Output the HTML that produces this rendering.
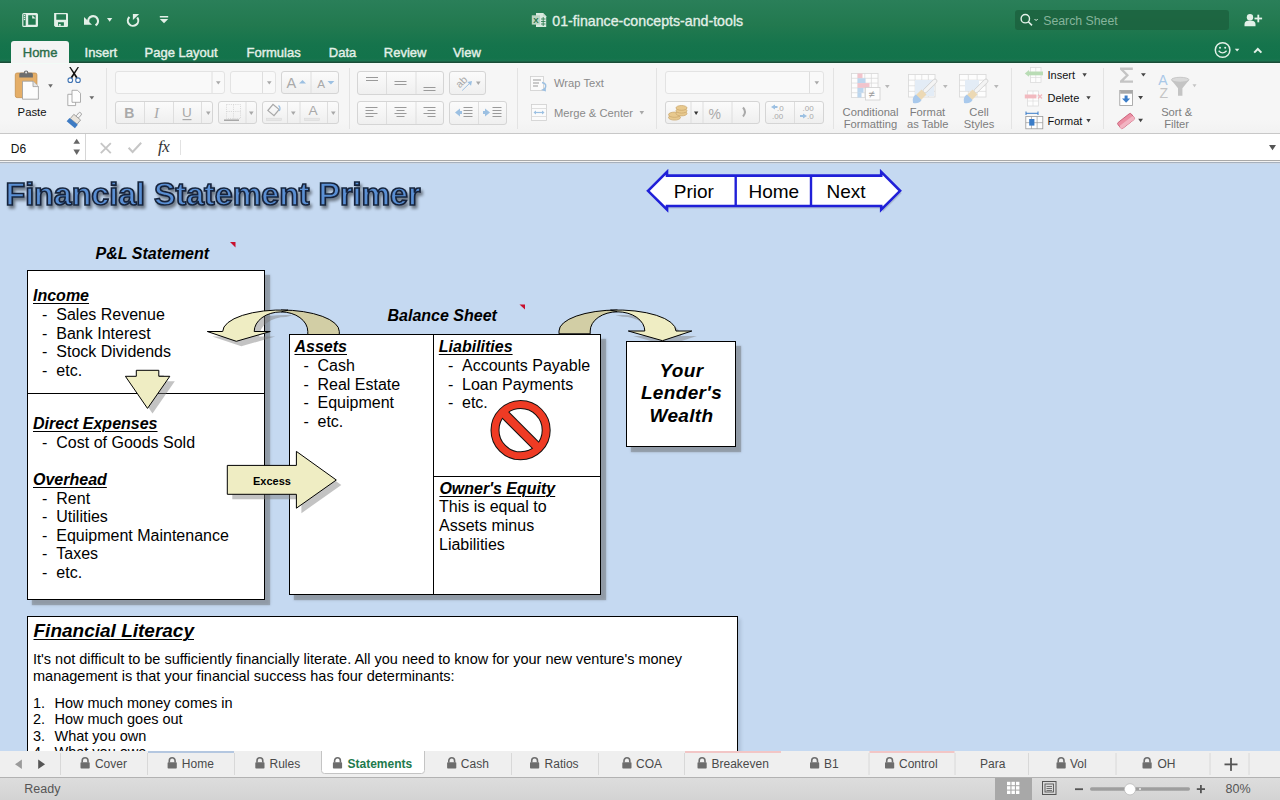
<!DOCTYPE html>
<html><head><meta charset="utf-8">
<style>
*{margin:0;padding:0;box-sizing:border-box}
html,body{width:1280px;height:800px;overflow:hidden;font-family:"Liberation Sans",sans-serif;background:#c5d9f1}
.a{position:absolute}
.t{white-space:nowrap}
#top{left:0;top:0;width:1280px;height:64px;background:linear-gradient(#2a7f59 0px,#22794f 25px,#15744c 45px,#13734b 58px,#1a7450 61px,#1a4c37 62px,#1a4c37 63px,#f2fbf6 63px)}
#ribbon{left:0;top:64px;width:1280px;height:70px;background:linear-gradient(#f6f6f6 80%,#f2f2f2);border-bottom:1px solid #c8c8c8}
#fbar{left:0;top:134px;width:1280px;height:28px;background:#fff;border-bottom:2px solid #c9c9c9}
#sheet{left:0;top:162px;width:1280px;height:589px;background:#c5d9f1;overflow:hidden}
#tabs{left:0;top:751px;width:1280px;height:27px;background:#f0f0f0;border-bottom:1px solid #b9b9b9}
#status{left:0;top:778px;width:1280px;height:22px;background:linear-gradient(#dcdcdc,#d2d2d2)}
.box{position:absolute;background:#fff;border:1px solid #000;box-shadow:5px 5px 1px rgba(70,65,60,.3),5px 5px 3px rgba(70,65,60,.16)}
u{text-decoration-thickness:1px;text-underline-offset:2px}
</style></head><body>
<div id="top" class="a"></div>
<div id="ribbon" class="a"></div>
<div id="sheet" class="a">
<svg class="a" style="left:0;top:0" width="1280" height="589">
<defs><filter id="tsh" x="-5%" y="-20%" width="110%" height="150%"><feGaussianBlur in="SourceAlpha" stdDeviation="1.6"/><feOffset dx="2" dy="3" result="b"/><feComponentTransfer><feFuncA type="linear" slope="0.45"/></feComponentTransfer><feMerge><feMergeNode/><feMergeNode in="SourceGraphic"/></feMerge></filter></defs>
<text x="5.5" y="43.30000000000001" font-family="Liberation Sans" font-weight="700" font-size="32.2" fill="#5a8fd4" stroke="#17243a" stroke-width="1.7" filter="url(#tsh)">Financial Statement Primer</text>
</svg><div class="box" style="left:27px;top:108px;width:238px;height:330px"></div><div class="a" style="left:28px;top:231px;width:236px;height:1px;background:#000"></div><div class="box" style="left:289px;top:172px;width:312px;height:261px"></div><div class="a" style="left:433px;top:173px;width:1px;height:259px;background:#000"></div><div class="a" style="left:434px;top:314px;width:166px;height:1px;background:#000"></div><div class="box" style="left:27px;top:454px;width:711px;height:200px;box-shadow:3px 3px 3px rgba(70,80,100,.16)"></div><svg class="a" style="left:229px;top:79px" width="8" height="8"><polygon points="1,1 6.5,1 6.5,6.5" fill="#c8102e"/></svg><svg class="a" style="left:519px;top:142px" width="8" height="8"><polygon points="0.5,0.5 6,0.5 6,5.5" fill="#c8102e"/></svg><div class="a t" style="left:95.6px;top:82.16px;font-size:16px;line-height:19.2px;font-weight:700;font-style:italic;color:#000;">P&amp;L Statement</div>
<div class="a t" style="left:387.5px;top:143.96px;font-size:16px;line-height:19.2px;font-weight:700;font-style:italic;color:#000;">Balance Sheet</div>
<div class="a t" style="left:33px;top:123.96px;font-size:16px;line-height:19.2px;font-weight:700;font-style:italic;color:#000;"><u>Income</u></div>
<div class="a t" style="left:42px;top:143.06px;font-size:16px;line-height:19.2px;font-weight:400;font-style:normal;color:#000;">-</div>
<div class="a t" style="left:56.3px;top:143.06px;font-size:16px;line-height:19.2px;font-weight:400;font-style:normal;color:#000;">Sales Revenue</div>
<div class="a t" style="left:42px;top:161.56px;font-size:16px;line-height:19.2px;font-weight:400;font-style:normal;color:#000;">-</div>
<div class="a t" style="left:56.3px;top:161.56px;font-size:16px;line-height:19.2px;font-weight:400;font-style:normal;color:#000;">Bank Interest</div>
<div class="a t" style="left:42px;top:180.06px;font-size:16px;line-height:19.2px;font-weight:400;font-style:normal;color:#000;">-</div>
<div class="a t" style="left:56.3px;top:180.06px;font-size:16px;line-height:19.2px;font-weight:400;font-style:normal;color:#000;">Stock Dividends</div>
<div class="a t" style="left:42px;top:198.56px;font-size:16px;line-height:19.2px;font-weight:400;font-style:normal;color:#000;">-</div>
<div class="a t" style="left:56.3px;top:198.56px;font-size:16px;line-height:19.2px;font-weight:400;font-style:normal;color:#000;">etc.</div>
<div class="a t" style="left:33px;top:251.86px;font-size:16px;line-height:19.2px;font-weight:700;font-style:italic;color:#000;"><u>Direct Expenses</u></div>
<div class="a t" style="left:42px;top:270.66px;font-size:16px;line-height:19.2px;font-weight:400;font-style:normal;color:#000;">-</div>
<div class="a t" style="left:56.3px;top:270.66px;font-size:16px;line-height:19.2px;font-weight:400;font-style:normal;color:#000;">Cost of Goods Sold</div>
<div class="a t" style="left:33px;top:307.86px;font-size:16px;line-height:19.2px;font-weight:700;font-style:italic;color:#000;"><u>Overhead</u></div>
<div class="a t" style="left:42px;top:326.66px;font-size:16px;line-height:19.2px;font-weight:400;font-style:normal;color:#000;">-</div>
<div class="a t" style="left:56.3px;top:326.66px;font-size:16px;line-height:19.2px;font-weight:400;font-style:normal;color:#000;">Rent</div>
<div class="a t" style="left:42px;top:345.16px;font-size:16px;line-height:19.2px;font-weight:400;font-style:normal;color:#000;">-</div>
<div class="a t" style="left:56.3px;top:345.16px;font-size:16px;line-height:19.2px;font-weight:400;font-style:normal;color:#000;">Utilities</div>
<div class="a t" style="left:42px;top:363.66px;font-size:16px;line-height:19.2px;font-weight:400;font-style:normal;color:#000;">-</div>
<div class="a t" style="left:56.3px;top:363.66px;font-size:16px;line-height:19.2px;font-weight:400;font-style:normal;color:#000;">Equipment Maintenance</div>
<div class="a t" style="left:42px;top:382.16px;font-size:16px;line-height:19.2px;font-weight:400;font-style:normal;color:#000;">-</div>
<div class="a t" style="left:56.3px;top:382.16px;font-size:16px;line-height:19.2px;font-weight:400;font-style:normal;color:#000;">Taxes</div>
<div class="a t" style="left:42px;top:400.66px;font-size:16px;line-height:19.2px;font-weight:400;font-style:normal;color:#000;">-</div>
<div class="a t" style="left:56.3px;top:400.66px;font-size:16px;line-height:19.2px;font-weight:400;font-style:normal;color:#000;">etc.</div>
<div class="a t" style="left:294.5px;top:174.86px;font-size:16px;line-height:19.2px;font-weight:700;font-style:italic;color:#000;"><u>Assets</u></div>
<div class="a t" style="left:303.5px;top:193.96px;font-size:16px;line-height:19.2px;font-weight:400;font-style:normal;color:#000;">-</div>
<div class="a t" style="left:317.5px;top:193.96px;font-size:16px;line-height:19.2px;font-weight:400;font-style:normal;color:#000;">Cash</div>
<div class="a t" style="left:303.5px;top:212.56px;font-size:16px;line-height:19.2px;font-weight:400;font-style:normal;color:#000;">-</div>
<div class="a t" style="left:317.5px;top:212.56px;font-size:16px;line-height:19.2px;font-weight:400;font-style:normal;color:#000;">Real Estate</div>
<div class="a t" style="left:303.5px;top:231.16px;font-size:16px;line-height:19.2px;font-weight:400;font-style:normal;color:#000;">-</div>
<div class="a t" style="left:317.5px;top:231.16px;font-size:16px;line-height:19.2px;font-weight:400;font-style:normal;color:#000;">Equipment</div>
<div class="a t" style="left:303.5px;top:249.76px;font-size:16px;line-height:19.2px;font-weight:400;font-style:normal;color:#000;">-</div>
<div class="a t" style="left:317.5px;top:249.76px;font-size:16px;line-height:19.2px;font-weight:400;font-style:normal;color:#000;">etc.</div>
<div class="a t" style="left:438.8px;top:174.66px;font-size:16px;line-height:19.2px;font-weight:700;font-style:italic;color:#000;"><u>Liabilities</u></div>
<div class="a t" style="left:448px;top:193.96px;font-size:16px;line-height:19.2px;font-weight:400;font-style:normal;color:#000;">-</div>
<div class="a t" style="left:462px;top:193.96px;font-size:16px;line-height:19.2px;font-weight:400;font-style:normal;color:#000;">Accounts Payable</div>
<div class="a t" style="left:448px;top:212.56px;font-size:16px;line-height:19.2px;font-weight:400;font-style:normal;color:#000;">-</div>
<div class="a t" style="left:462px;top:212.56px;font-size:16px;line-height:19.2px;font-weight:400;font-style:normal;color:#000;">Loan Payments</div>
<div class="a t" style="left:448px;top:231.16px;font-size:16px;line-height:19.2px;font-weight:400;font-style:normal;color:#000;">-</div>
<div class="a t" style="left:462px;top:231.16px;font-size:16px;line-height:19.2px;font-weight:400;font-style:normal;color:#000;">etc.</div>
<div class="a t" style="left:439.4px;top:316.76px;font-size:16px;line-height:19.2px;font-weight:700;font-style:italic;color:#000;"><u>Owner's Equity</u></div>
<div class="a t" style="left:439px;top:335.36px;font-size:16px;line-height:19.2px;font-weight:400;font-style:normal;color:#000;">This is equal to</div>
<div class="a t" style="left:439px;top:353.96px;font-size:16px;line-height:19.2px;font-weight:400;font-style:normal;color:#000;">Assets minus</div>
<div class="a t" style="left:439px;top:372.56px;font-size:16px;line-height:19.2px;font-weight:400;font-style:normal;color:#000;">Liabilities</div>
<div class="a t" style="left:33.5px;top:458.02px;font-size:19px;line-height:22.8px;font-weight:700;font-style:italic;color:#000;"><u>Financial Literacy</u></div>
<div class="a t" style="left:33px;top:489.18px;font-size:14.5px;line-height:17.4px;font-weight:400;font-style:normal;color:#000;">It's not difficult to be sufficiently financially literate. All you need to know for your new venture's money</div>
<div class="a t" style="left:33px;top:506.08px;font-size:14.5px;line-height:17.4px;font-weight:400;font-style:normal;color:#000;">management is that your financial success has four determinants:</div>
<div class="a t" style="left:33px;top:532.58px;font-size:14.5px;line-height:17.4px;font-weight:400;font-style:normal;color:#000;">1.</div>
<div class="a t" style="left:54.5px;top:532.58px;font-size:14.5px;line-height:17.4px;font-weight:400;font-style:normal;color:#000;">How much money comes in</div>
<div class="a t" style="left:33px;top:549.18px;font-size:14.5px;line-height:17.4px;font-weight:400;font-style:normal;color:#000;">2.</div>
<div class="a t" style="left:54.5px;top:549.18px;font-size:14.5px;line-height:17.4px;font-weight:400;font-style:normal;color:#000;">How much goes out</div>
<div class="a t" style="left:33px;top:565.78px;font-size:14.5px;line-height:17.4px;font-weight:400;font-style:normal;color:#000;">3.</div>
<div class="a t" style="left:54.5px;top:565.78px;font-size:14.5px;line-height:17.4px;font-weight:400;font-style:normal;color:#000;">What you own</div>
<div class="a t" style="left:33px;top:582.38px;font-size:14.5px;line-height:17.4px;font-weight:400;font-style:normal;color:#000;">4.</div>
<div class="a t" style="left:54.5px;top:582.38px;font-size:14.5px;line-height:17.4px;font-weight:400;font-style:normal;color:#000;">What you owe</div>
<svg class="a" style="left:0;top:0;overflow:visible" width="1280" height="589"><polygon points="136.3,208.3 158.8,208.3 158.8,214.3 169.8,214.3 147.5,246.4 125.4,214.3 136.3,214.3" fill="#7a7a7a" fill-opacity="0.45" transform="translate(5,5)"/><polygon points="136.3,208.3 158.8,208.3 158.8,214.3 169.8,214.3 147.5,246.4 125.4,214.3 136.3,214.3" fill="#efedc3" stroke="#000" stroke-width="1"/><polygon points="227.3,303.4 296.4,303.4 296.4,289.4 336.3,318.0 296.4,346.2 296.4,332.3 227.3,332.3" fill="#7a7a7a" fill-opacity="0.45" transform="translate(5,5)"/><polygon points="227.3,303.4 296.4,303.4 296.4,289.4 336.3,318.0 296.4,346.2 296.4,332.3 227.3,332.3" fill="#efedc3" stroke="#000" stroke-width="1"/></svg><div class="a t" style="left:253px;top:312.89px;font-size:11px;line-height:13.2px;font-weight:700;font-style:normal;color:#000;">Excess</div>
<svg class="a" style="left:0;top:0;overflow:visible" width="1280" height="589"><path d="M207.3,169.5 L222.7,169.5 A58.3,21.5 0 0 1 288.00,148.16 L281,149.9 A26.8,19.6 0 0 0 254.2,169.5 L270.3,169.5 L236.3,179.3 Z" fill="#7a7a7a" fill-opacity="0.45" transform="translate(5,5)"/><path d="M339.3,172.5 L339.3,169.5 A58.3,21.5 0 0 0 281,148.0 L281,149.9 A26.8,19.6 0 0 1 307.8,169.5 L307.8,172.5 Z" fill="#d2cea5" stroke="#000" stroke-width="1"/><path d="M207.3,169.5 L222.7,169.5 A58.3,21.5 0 0 1 288.00,148.16 L281,149.9 A26.8,19.6 0 0 0 254.2,169.5 L270.3,169.5 L236.3,179.3 Z" fill="#efedc3" stroke="#000" stroke-width="1" stroke-linejoin="miter"/><path d="M691.8,169 L676.0,169 A58.5,21 0 0 0 610.50,148.15 L617.5,149.8 A27.3,19.2 0 0 1 644.8,169 L628.3,169 L662.5,178.7 Z" fill="#7a7a7a" fill-opacity="0.45" transform="translate(5,5)"/><path d="M559.0,171.8 L559.0,169 A58.5,21 0 0 1 617.5,148 L617.5,149.8 A27.3,19.2 0 0 0 590.2,169 L590.2,171.8 Z" fill="#d2cea5" stroke="#000" stroke-width="1"/><path d="M691.8,169 L676.0,169 A58.5,21 0 0 0 610.50,148.15 L617.5,149.8 A27.3,19.2 0 0 1 644.8,169 L628.3,169 L662.5,178.7 Z" fill="#efedc3" stroke="#000" stroke-width="1" stroke-linejoin="miter"/></svg><div class="box" style="left:626px;top:179px;width:110px;height:106px"></div><div class="a" style="left:626px;top:179px;width:110px;text-align:center"></div><div class="a t" style="left:626px;width:111px;text-align:center;top:196.82px;font-size:19px;line-height:24px;font-weight:700;font-style:italic;letter-spacing:0.35px">Your</div><div class="a t" style="left:626px;width:111px;text-align:center;top:219.32px;font-size:19px;line-height:24px;font-weight:700;font-style:italic;letter-spacing:0.35px">Lender's</div><div class="a t" style="left:626px;width:111px;text-align:center;top:241.82px;font-size:19px;line-height:24px;font-weight:700;font-style:italic;letter-spacing:0.35px">Wealth</div><svg class="a" style="left:0;top:0" width="1280" height="589">
<circle cx="520.6" cy="268.2" r="25.6" fill="none" stroke="#111" stroke-width="9"/>
<g transform="rotate(45 520.6 268.2)"><rect x="497.6" y="263.2" width="46" height="10" fill="#111"/></g>
<circle cx="520.6" cy="268.2" r="25.6" fill="none" stroke="#ef3b24" stroke-width="7"/>
<g transform="rotate(45 520.6 268.2)"><rect x="497.6" y="264.2" width="46" height="8" fill="#ef3b24"/></g>
</svg><svg class="a" style="left:0;top:0" width="1280" height="589">
<polygon points="648.0,28.8 667.0,9.9 667.0,13.6 881.2,13.6 881.2,9.9 900.1,28.8 881.2,47.6 881.2,44.0 667.0,44.0 667.0,47.6" fill="#7a8aa0" fill-opacity=".35" transform="translate(1.5,2.5)"/>
<polygon points="648.0,28.8 667.0,9.9 667.0,13.6 881.2,13.6 881.2,9.9 900.1,28.8 881.2,47.6 881.2,44.0 667.0,44.0 667.0,47.6" fill="#fff" stroke="#2020d8" stroke-width="2.6" stroke-linejoin="miter"/>
<line x1="735.7" y1="13.599999999999994" x2="735.7" y2="44" stroke="#2020d8" stroke-width="2.4"/>
<line x1="811" y1="13.599999999999994" x2="811" y2="44" stroke="#2020d8" stroke-width="2.4"/>
</svg><div class="a t" style="left:673.8px;top:19.12px;font-size:19px;line-height:22.8px;font-weight:400;font-style:normal;color:#000;">Prior</div>
<div class="a t" style="left:748.5px;top:19.12px;font-size:19px;line-height:22.8px;font-weight:400;font-style:normal;color:#000;">Home</div>
<div class="a t" style="left:826.5px;top:19.12px;font-size:19px;line-height:22.8px;font-weight:400;font-style:normal;color:#000;">Next</div>

</div>
<svg class="a" style="left:0;top:0" width="1280" height="63">
<path fill-rule="evenodd" fill="#e3f0e8" d="M23.8 13 h12.6 a1.6 1.6 0 0 1 1.6 1.6 v10.9 a1.6 1.6 0 0 1 -1.6 1.6 h-12.6 a1.6 1.6 0 0 1 -1.6 -1.6 v-10.9 a1.6 1.6 0 0 1 1.6 -1.6 z M23.4 14.3 v11.4 h2.3 v-11.4 z M28.2 15.2 v9.5 h7.5 v-9.5 z"/>
<path d="M32.2 15.2 v3.4 h3.5 z" fill="#e3f0e8"/>
<circle cx="24.5" cy="15.6" r=".75" fill="#e3f0e8"/><circle cx="24.5" cy="17.6" r=".75" fill="#e3f0e8"/><circle cx="24.5" cy="19.6" r=".75" fill="#e3f0e8"/>
<path fill-rule="evenodd" fill="#e3f0e8" d="M54.1 12.9 h12.6 a1.3 1.3 0 0 1 1.3 1.3 v11.6 a1.3 1.3 0 0 1 -1.3 1.3 h-11.2 l-1.4 -1.4 z M56.3 14.3 v5.4 h9.7 v-5.4 z M58 22.3 v3.5 h5.9 v-3.5 z"/>
<rect x="58.8" y="24" width="1.9" height="1.8" fill="#e3f0e8"/>
<g fill="none" stroke="#e3f0e8" stroke-width="2.2" stroke-linecap="butt">
 <path d="M88.3 22 A4.9 4.9 0 1 1 95.5 25.3"/>
</g>
<polygon points="84,17 84,24.8 92,24.8" fill="#e3f0e8"/>
<polygon points="107,18 112.3,18 109.65,21.8" fill="#e3f0e8"/>
<path d="M129.4 16.9 A5.2 5.2 0 1 0 137.2 17.5" fill="none" stroke="#e3f0e8" stroke-width="2.1"/>
<polygon points="132.9,14 139.2,14 132.9,20.1" fill="#e3f0e8"/>
<rect x="159.8" y="16" width="8.4" height="1.5" fill="#e3f0e8"/>
<polygon points="159.8,19 168.2,19 164,23.2" fill="#e3f0e8"/>
<!-- excel doc icon -->
<path d="M536 13 h7 l3.2 3.2 v10.8 h-10.2 z" fill="#e3f0e8" opacity=".95"/>
<path d="M543 13 v3.2 h3.2" fill="#c8dccf"/>
<rect x="531.8" y="15.3" width="8.2" height="9.3" fill="#bcd6c4"/>
<text x="533.2" y="23.3" font-family="Liberation Sans" font-size="8" font-weight="700" fill="#217346">X</text>
<g stroke="#217346" stroke-width=".8"><line x1="541" y1="19" x2="545.5" y2="19"/><line x1="541" y1="21.5" x2="545.5" y2="21.5"/><line x1="541" y1="24" x2="545.5" y2="24"/><line x1="543.2" y1="17" x2="543.2" y2="26"/></g>
<!-- search box -->
<rect x="1015" y="10" width="214" height="20" rx="3" fill="#1b5f3c" fill-opacity=".75"/>
<circle cx="1025.3" cy="18.7" r="4.2" fill="none" stroke="#e3f0e8" stroke-width="1.4"/>
<line x1="1028.3" y1="21.7" x2="1032" y2="25.4" stroke="#e3f0e8" stroke-width="1.6"/>
<path d="M1034.5 19 l1.6 1.6 l1.6 -1.6" fill="none" stroke="#e3f0e8" stroke-width="1"/>
<!-- person+ -->
<circle cx="1250" cy="17.3" r="3.2" fill="#e3f0e8"/>
<path d="M1244.5 26.2 v-2.2 c0 -2.5 2.2 -3.6 5.5 -3.6 c3.3 0 5.5 1.1 5.5 3.6 v2.2 z" fill="#e3f0e8"/>
<rect x="1254.5" y="17.6" width="7.6" height="1.8" fill="#e3f0e8"/>
<rect x="1257.4" y="14.7" width="1.8" height="7.6" fill="#e3f0e8"/>
<!-- smiley -->
<circle cx="1222.6" cy="50" r="7.3" fill="none" stroke="#e3f0e8" stroke-width="1.5"/>
<circle cx="1220" cy="47.8" r="1" fill="#e3f0e8"/><circle cx="1225.2" cy="47.8" r="1" fill="#e3f0e8"/>
<path d="M1218.6 50.8 q4 4.2 8 0" fill="none" stroke="#e3f0e8" stroke-width="1.4"/>
<polygon points="1234.8,48.7 1239.4,48.7 1237.1,51.6" fill="#e3f0e8"/>
<path d="M1254.2 52.6 l3.6 -3.6 l3.6 3.6" fill="none" stroke="#e3f0e8" stroke-width="2"/>
<!-- Home tab -->
<path d="M11 63 v-19 a3 3 0 0 1 3 -3 h52 a3 3 0 0 1 3 3 v19 z" fill="#f4f4f4"/>
</svg><div class="a t" style="left:552.3px;top:12.76px;font-size:14.2px;line-height:17.04px;font-weight:400;font-style:normal;color:#e3f0e8;-webkit-text-stroke:0.3px #e3f0e8">01-finance-concepts-and-tools</div>
<div class="a t" style="left:1043.2px;top:13.96px;font-size:12.3px;line-height:14.76px;font-weight:400;font-style:normal;color:#86b49c;">Search Sheet</div>
<div class="a t" style="left:22.75px;top:44.95px;font-size:13px;line-height:15.6px;font-weight:400;font-style:normal;color:#2b6d4a;-webkit-text-stroke:0.4px #2b6d4a">Home</div>
<div class="a t" style="left:84.6px;top:44.95px;font-size:13px;line-height:15.6px;font-weight:400;font-style:normal;color:#e3f0e8;-webkit-text-stroke:0.4px #e3f0e8">Insert</div>
<div class="a t" style="left:144.6px;top:44.95px;font-size:13px;line-height:15.6px;font-weight:400;font-style:normal;color:#e3f0e8;-webkit-text-stroke:0.4px #e3f0e8">Page Layout</div>
<div class="a t" style="left:246.5px;top:44.95px;font-size:13px;line-height:15.6px;font-weight:400;font-style:normal;color:#e3f0e8;-webkit-text-stroke:0.4px #e3f0e8">Formulas</div>
<div class="a t" style="left:328.8px;top:44.95px;font-size:13px;line-height:15.6px;font-weight:400;font-style:normal;color:#e3f0e8;-webkit-text-stroke:0.4px #e3f0e8">Data</div>
<div class="a t" style="left:383.8px;top:44.95px;font-size:13px;line-height:15.6px;font-weight:400;font-style:normal;color:#e3f0e8;-webkit-text-stroke:0.4px #e3f0e8">Review</div>
<div class="a t" style="left:452.9px;top:44.95px;font-size:13px;line-height:15.6px;font-weight:400;font-style:normal;color:#e3f0e8;-webkit-text-stroke:0.4px #e3f0e8">View</div>

<svg class="a" style="left:0;top:0" width="1280" height="134"><line x1="106.5" y1="68" x2="106.5" y2="129" stroke="#e3e3e3" stroke-width="1"/><line x1="349.5" y1="68" x2="349.5" y2="129" stroke="#e3e3e3" stroke-width="1"/><line x1="517.5" y1="68" x2="517.5" y2="129" stroke="#e3e3e3" stroke-width="1"/><line x1="656.5" y1="68" x2="656.5" y2="129" stroke="#e3e3e3" stroke-width="1"/><line x1="833.5" y1="68" x2="833.5" y2="129" stroke="#e3e3e3" stroke-width="1"/><line x1="1011.5" y1="68" x2="1011.5" y2="129" stroke="#e3e3e3" stroke-width="1"/><line x1="1103.5" y1="68" x2="1103.5" y2="129" stroke="#e3e3e3" stroke-width="1"/><rect x="15.3" y="73" width="21.6" height="24.6" rx="1.8" fill="#e5ae67" stroke="#c58f4d" stroke-width=".8"/>
<path d="M19.3 77.4 v-3.2 a1.5 1.5 0 0 1 1.5 -1.5 h3 a2.3 2.3 0 0 1 4.6 0 h3 a1.5 1.5 0 0 1 1.5 1.5 v3.2 z" fill="#6e6e6e"/>
<circle cx="26.1" cy="72.5" r="1" fill="#e8e8e8"/>
<path d="M22.5 81.2 h10.5 l5.4 5.4 v12.6 h-15.9 z" fill="#fcfcfc" stroke="#9a9a9a" stroke-width=".8"/>
<path d="M33 81.2 v5.4 h5.4" fill="#e6e6e6" stroke="#9a9a9a" stroke-width=".8"/>
<polygon points="48.2,84.2 52.8,84.2 50.5,87.8" fill="#6a6a6a"/>
<polygon points="69.2,67 70.6,67 77.6,77.2 76.2,78.4" fill="#111"/><polygon points="79,67 77.6,67 70.6,77.2 72,78.4" fill="#111"/>
<circle cx="70.3" cy="80.2" r="2.3" fill="#fff" stroke="#3f73b3" stroke-width="1.1"/>
<circle cx="78" cy="80.2" r="2.3" fill="#fff" stroke="#3f73b3" stroke-width="1.1"/>
<path d="M67.8 94.3 h5 l2.8 2.8 v8.5 h-7.8 z" fill="#fdfdfd" stroke="#9a9a9a" stroke-width=".8"/>
<path d="M72 90.3 h5.5 l3 3 v9 h-8.5 z" fill="#fdfdfd" stroke="#9a9a9a" stroke-width=".8"/>
<polygon points="89.4,96.2 94.2,96.2 91.8,99.6" fill="#6a6a6a"/>
<g transform="rotate(40 74 121)">
<rect x="72.4" y="110.5" width="3.2" height="6" rx="1.2" fill="#f5f5f5" stroke="#8a8a8a" stroke-width=".7"/>
<rect x="69.6" y="116" width="8.8" height="5.5" fill="#e9e4dc" stroke="#8a8a8a" stroke-width=".7"/>
<path d="M68.6 121.5 h10.8 v4.5 h-10.8 z" fill="#3e7bc3"/>
</g>
<defs><linearGradient id="bg" x1="0" y1="0" x2="0" y2="1"><stop offset="0" stop-color="#fbfbfb"/><stop offset="1" stop-color="#efefef"/></linearGradient></defs><rect x="115.5" y="71.5" width="109" height="22" rx="2.5" fill="#f9f9f9" stroke="#e3e3e3" stroke-width="1"/><line x1="212.0" y1="72" x2="212.0" y2="93" stroke="#dedede" stroke-width="1"/><polygon points="216,81.2 220.6,81.2 218.3,84.60000000000001" fill="#a8a8a8"/><rect x="230.5" y="71.5" width="45" height="22" rx="2.5" fill="#f9f9f9" stroke="#e3e3e3" stroke-width="1"/><line x1="262.5" y1="72" x2="262.5" y2="93" stroke="#dedede" stroke-width="1"/><polygon points="267,81.2 271.6,81.2 269.3,84.60000000000001" fill="#a8a8a8"/><rect x="281.5" y="71.5" width="57" height="22" rx="2.5" fill="url(#bg)" stroke="#d5d5d5" stroke-width="1"/><line x1="311.0" y1="72" x2="311.0" y2="93" stroke="#dedede" stroke-width="1"/><rect x="115.5" y="101.5" width="97" height="22" rx="2.5" fill="url(#bg)" stroke="#d5d5d5" stroke-width="1"/><line x1="144.5" y1="102" x2="144.5" y2="123" stroke="#dedede" stroke-width="1"/><line x1="173.5" y1="102" x2="173.5" y2="123" stroke="#dedede" stroke-width="1"/><line x1="201.5" y1="102" x2="201.5" y2="123" stroke="#dedede" stroke-width="1"/><rect x="218.5" y="101.5" width="38" height="22" rx="2.5" fill="url(#bg)" stroke="#d5d5d5" stroke-width="1"/><line x1="246.0" y1="102" x2="246.0" y2="123" stroke="#dedede" stroke-width="1"/><rect x="262.5" y="101.5" width="76" height="22" rx="2.5" fill="url(#bg)" stroke="#d5d5d5" stroke-width="1"/><line x1="287.5" y1="102" x2="287.5" y2="123" stroke="#dedede" stroke-width="1"/><line x1="300.0" y1="102" x2="300.0" y2="123" stroke="#dedede" stroke-width="1"/><line x1="327.5" y1="102" x2="327.5" y2="123" stroke="#dedede" stroke-width="1"/><polygon points="206,111.5 210.6,111.5 208.3,114.9" fill="#a8a8a8"/><polygon points="249,111.5 253.6,111.5 251.3,114.9" fill="#a8a8a8"/><polygon points="291,111.5 295.6,111.5 293.3,114.9" fill="#a8a8a8"/><polygon points="331,111.5 335.6,111.5 333.3,114.9" fill="#a8a8a8"/><text x="286.6" y="88" font-family="Liberation Sans" font-size="14.5" fill="#a9a9a9">A</text><polygon points="299,83.5 306,83.5 302.5,80" fill="#9cc0e2"/><text x="317.2" y="88" font-family="Liberation Sans" font-size="11.7" fill="#a9a9a9">A</text><polygon points="327.5,81 334.4,81 330.95,84.5" fill="#9cc0e2"/><text x="124.3" y="118" font-family="Liberation Sans" font-weight="700" font-size="14" fill="#a9a9a9">B</text><text x="154" y="118" font-family="Liberation Serif" font-style="italic" font-size="15" fill="#a9a9a9">I</text><text x="182" y="116.5" font-family="Liberation Sans" font-size="13.5" fill="#a9a9a9">U</text><rect x="182.5" y="119" width="9" height="1.2" fill="#a9a9a9"/><rect x="226.5" y="104.5" width="14" height="14" fill="none" stroke="#cfcfcf" stroke-width=".8" stroke-dasharray="1 1.2"/><line x1="233.5" y1="104.5" x2="233.5" y2="118.5" stroke="#cfcfcf" stroke-width=".8" stroke-dasharray="1 1.2"/><line x1="226.5" y1="111.5" x2="240.5" y2="111.5" stroke="#cfcfcf" stroke-width=".8" stroke-dasharray="1 1.2"/><rect x="224" y="119.5" width="15" height="1.4" fill="#a0a0a0"/><g transform="rotate(40 273.5 110)"><rect x="269.5" y="106" width="8" height="8" fill="none" stroke="#a9a9a9" stroke-width="1.2"/></g><path d="M278.5 105.5 q2.5 2 0.8 5.5" fill="none" stroke="#9cc0e2" stroke-width="1.3"/><rect x="266.5" y="118.2" width="15" height="2.5" fill="#e6e6e6" stroke="#d8d8d8" stroke-width=".5"/><text x="308.6" y="114.8" font-family="Liberation Sans" font-size="13.7" fill="#a9a9a9">A</text><rect x="304.5" y="118.2" width="15" height="2.5" fill="#e6e6e6" stroke="#d8d8d8" stroke-width=".5"/><rect x="357.5" y="71.5" width="86" height="23" rx="2.5" fill="url(#bg)" stroke="#d5d5d5" stroke-width="1"/><line x1="386.5" y1="72" x2="386.5" y2="94" stroke="#dedede" stroke-width="1"/><line x1="416.0" y1="72" x2="416.0" y2="94" stroke="#dedede" stroke-width="1"/><rect x="449.5" y="71.5" width="36" height="23" rx="2.5" fill="url(#bg)" stroke="#d5d5d5" stroke-width="1"/><polygon points="476,81.5 480.6,81.5 478.3,84.9" fill="#a8a8a8"/><rect x="357.5" y="101.5" width="86" height="23" rx="2.5" fill="url(#bg)" stroke="#d5d5d5" stroke-width="1"/><line x1="386.5" y1="102" x2="386.5" y2="124" stroke="#dedede" stroke-width="1"/><line x1="416.0" y1="102" x2="416.0" y2="124" stroke="#dedede" stroke-width="1"/><rect x="449.5" y="101.5" width="57" height="23" rx="2.5" fill="url(#bg)" stroke="#d5d5d5" stroke-width="1"/><line x1="478.5" y1="102" x2="478.5" y2="124" stroke="#dedede" stroke-width="1"/><rect x="366" y="77" width="11" height="1" fill="#9a9a9a"/><rect x="366" y="79" width="0" height="1" fill="#9a9a9a"/><rect x="394.5" y="81" width="12" height="1" fill="#9a9a9a"/><rect x="394.5" y="84" width="12" height="1" fill="#9a9a9a"/><rect x="423.5" y="87" width="12" height="1" fill="#9a9a9a"/><rect x="423.5" y="90" width="12" height="1" fill="#9a9a9a"/><rect x="366" y="77" width="12" height="1" fill="#9a9a9a"/><rect x="366" y="80" width="12" height="1" fill="#9a9a9a"/><rect x="365.5" y="107" width="12" height="1" fill="#9a9a9a"/><rect x="365.5" y="110" width="8" height="1" fill="#9a9a9a"/><rect x="365.5" y="113" width="12" height="1" fill="#9a9a9a"/><rect x="365.5" y="116" width="8" height="1" fill="#9a9a9a"/><rect x="394.5" y="107" width="12" height="1" fill="#9a9a9a"/><rect x="396.5" y="110" width="8" height="1" fill="#9a9a9a"/><rect x="394.5" y="113" width="12" height="1" fill="#9a9a9a"/><rect x="396.5" y="116" width="8" height="1" fill="#9a9a9a"/><rect x="423.5" y="107" width="12" height="1" fill="#9a9a9a"/><rect x="427.5" y="110" width="8" height="1" fill="#9a9a9a"/><rect x="423.5" y="113" width="12" height="1" fill="#9a9a9a"/><rect x="427.5" y="116" width="8" height="1" fill="#9a9a9a"/><text x="461.5" y="85.5" text-anchor="middle" font-family="Liberation Sans" font-size="10.5" fill="#a9a9a9" transform="rotate(-45 461.5 82)">ab</text><line x1="462.2" y1="90.5" x2="470.5" y2="82.5" stroke="#9cc0e2" stroke-width="1"/><polygon points="472,81 467.3,82 471,85.7" fill="#9cc0e2"/><polygon points="455,112.5 460,108.5 460,116.5" fill="#9cc0e2"/><rect x="459" y="111" width="3" height="3" fill="#9cc0e2"/><rect x="463.5" y="107" width="9" height="1" fill="#9a9a9a"/><rect x="463.5" y="110" width="9" height="1" fill="#9a9a9a"/><rect x="463.5" y="113" width="9" height="1" fill="#9a9a9a"/><rect x="463.5" y="116" width="9" height="1" fill="#9a9a9a"/><polygon points="490,112.5 485,108.5 485,116.5" fill="#9cc0e2"/><rect x="483" y="111" width="3" height="3" fill="#9cc0e2"/><rect x="492.5" y="107" width="9" height="1" fill="#9a9a9a"/><rect x="492.5" y="110" width="9" height="1" fill="#9a9a9a"/><rect x="492.5" y="113" width="9" height="1" fill="#9a9a9a"/><rect x="492.5" y="116" width="9" height="1" fill="#9a9a9a"/><rect x="530.5" y="76.5" width="13" height="14" fill="#fbfbfb" stroke="#cfcfcf" stroke-width=".8"/><rect x="533" y="79.5" width="8" height="1" fill="#9a9a9a"/><rect x="533" y="82.5" width="6" height="1" fill="#9a9a9a"/><rect x="533" y="85.5" width="5" height="1" fill="#9a9a9a"/><path d="M542 82.5 q6 1 2.5 7" fill="none" stroke="#9cc0e2" stroke-width="1.5"/><polygon points="541,90 545.5,87.5 546,91.5" fill="#9cc0e2"/><rect x="531.5" y="104.5" width="15" height="16" fill="#fbfbfb" stroke="#cfcfcf" stroke-width=".8"/><line x1="531.5" y1="108.5" x2="546.5" y2="108.5" stroke="#d8d8d8" stroke-width=".8"/><line x1="531.5" y1="116.5" x2="546.5" y2="116.5" stroke="#d8d8d8" stroke-width=".8"/><line x1="534.5" y1="112.5" x2="543.5" y2="112.5" stroke="#9cc0e2" stroke-width="1.2"/><polygon points="533.5,112.5 536,110.5 536,114.5" fill="#9cc0e2"/><polygon points="544.5,112.5 542,110.5 542,114.5" fill="#9cc0e2"/><polygon points="639.5,111 644.1,111 641.8,114.4" fill="#a8a8a8"/><rect x="665.5" y="71.5" width="158" height="22" rx="2.5" fill="#f9f9f9" stroke="#e3e3e3" stroke-width="1"/><line x1="809.5" y1="72" x2="809.5" y2="93" stroke="#dedede" stroke-width="1"/><polygon points="814.5,81.2 819.1,81.2 816.8,84.60000000000001" fill="#a8a8a8"/><rect x="665.5" y="101.5" width="94" height="22" rx="2.5" fill="url(#bg)" stroke="#d5d5d5" stroke-width="1"/><line x1="691.0" y1="102" x2="691.0" y2="123" stroke="#dedede" stroke-width="1"/><line x1="703.0" y1="102" x2="703.0" y2="123" stroke="#dedede" stroke-width="1"/><line x1="732.0" y1="102" x2="732.0" y2="123" stroke="#dedede" stroke-width="1"/><rect x="765.5" y="101.5" width="58" height="22" rx="2.5" fill="url(#bg)" stroke="#d5d5d5" stroke-width="1"/><line x1="794.5" y1="102" x2="794.5" y2="123" stroke="#dedede" stroke-width="1"/><polygon points="694,111.5 698.3,111.5 696.15,114.9" fill="#333"/><ellipse cx="674.5" cy="117.5" rx="6" ry="2.6" fill="#e8c98e" stroke="#c9a56a" stroke-width=".7"/><ellipse cx="674.5" cy="114.7" rx="6" ry="2.6" fill="#e8c98e" stroke="#c9a56a" stroke-width=".7"/><ellipse cx="681.5" cy="113.5" rx="5.5" ry="2.4" fill="#e8c98e" stroke="#c9a56a" stroke-width=".7"/><ellipse cx="681.5" cy="110.7" rx="5.5" ry="2.4" fill="#e8c98e" stroke="#c9a56a" stroke-width=".7"/><ellipse cx="681.5" cy="107.9" rx="5.5" ry="2.4" fill="#e8c98e" stroke="#c9a56a" stroke-width=".7"/><text x="708.5" y="118.5" font-family="Liberation Sans" font-size="14" fill="#a9a9a9">%</text><path d="M743 107.5 q4 4.5 0 9" fill="none" stroke="#a9a9a9" stroke-width="2"/><text x="777" y="111" font-family="Liberation Sans" font-size="8" fill="#a9a9a9">.0</text><text x="772" y="119" font-family="Liberation Sans" font-size="8" fill="#a9a9a9">.00</text><polygon points="771,107 775,104.5 775,109.5" fill="#9cc0e2"/><rect x="774.5" y="106" width="3" height="2" fill="#9cc0e2"/><text x="802.5" y="111" font-family="Liberation Sans" font-size="8" fill="#a9a9a9">.00</text><text x="807" y="119" font-family="Liberation Sans" font-size="8" fill="#a9a9a9">.0</text><polygon points="807,116 803,113.5 803,118.5" fill="#9cc0e2"/><rect x="800" y="115" width="3" height="2" fill="#9cc0e2"/><rect x="851.5" y="73.5" width="26.5" height="24" fill="#fdfdfd" stroke="#d8d8d8" stroke-width=".8"/><line x1="858.125" y1="73.5" x2="858.125" y2="97.5" stroke="#d8d8d8" stroke-width=".7"/><line x1="864.75" y1="73.5" x2="864.75" y2="97.5" stroke="#d8d8d8" stroke-width=".7"/><line x1="871.375" y1="73.5" x2="871.375" y2="97.5" stroke="#d8d8d8" stroke-width=".7"/><line x1="851.5" y1="78.3" x2="878.0" y2="78.3" stroke="#d8d8d8" stroke-width=".7"/><line x1="851.5" y1="83.1" x2="878.0" y2="83.1" stroke="#d8d8d8" stroke-width=".7"/><line x1="851.5" y1="87.9" x2="878.0" y2="87.9" stroke="#d8d8d8" stroke-width=".7"/><line x1="851.5" y1="92.7" x2="878.0" y2="92.7" stroke="#d8d8d8" stroke-width=".7"/><rect x="857.5" y="73.5" width="5" height="4.8" fill="#f1c4cc"/><rect x="857.5" y="78.3" width="8" height="4.8" fill="#bcd6ee"/><rect x="857.5" y="83.1" width="12" height="4.8" fill="#f1c4cc"/><rect x="857.5" y="87.9" width="6" height="4.8" fill="#bcd6ee"/><rect x="857.5" y="92.7" width="4" height="4.8" fill="#bcd6ee"/><rect x="865.5" y="87.5" width="14.5" height="12.5" fill="#fdfdfd" stroke="#d0d0d0" stroke-width=".8"/><text x="868.5" y="98" font-family="Liberation Sans" font-size="11" fill="#9a9a9a">≠</text><polygon points="885,85 889.6,85 887.3,88.2" fill="#b8b8b8"/><polygon points="943,85 947.6,85 945.3,88.2" fill="#b8b8b8"/><polygon points="994,85 998.6,85 996.3,88.2" fill="#b8b8b8"/><rect x="908.5" y="74.5" width="26.5" height="22.5" fill="#fdfdfd" stroke="#d8d8d8" stroke-width=".8"/><line x1="915.125" y1="74.5" x2="915.125" y2="97.0" stroke="#d8d8d8" stroke-width=".7"/><line x1="921.75" y1="74.5" x2="921.75" y2="97.0" stroke="#d8d8d8" stroke-width=".7"/><line x1="928.375" y1="74.5" x2="928.375" y2="97.0" stroke="#d8d8d8" stroke-width=".7"/><line x1="908.5" y1="80.125" x2="935.0" y2="80.125" stroke="#d8d8d8" stroke-width=".7"/><line x1="908.5" y1="85.75" x2="935.0" y2="85.75" stroke="#d8d8d8" stroke-width=".7"/><line x1="908.5" y1="91.375" x2="935.0" y2="91.375" stroke="#d8d8d8" stroke-width=".7"/><rect x="915" y="80" width="19" height="16" fill="#e3ecf6"/><g transform="translate(918 98) rotate(-45)"><rect x="8" y="-2" width="18" height="4" rx="2" fill="#f4f4f4" stroke="#c8c8c8" stroke-width=".7"/><path d="M0 -3.5 q-2 3.5 0 7 h8.5 v-7 z" fill="#ecd9b5"/><path d="M-7 0 q3 -5 8 -4 v8 q-5 1 -8 -4 z" fill="#a9c9ec"/></g><rect x="959.5" y="74.5" width="26.5" height="22.5" fill="#fdfdfd" stroke="#d8d8d8" stroke-width=".8"/><line x1="968.3333333333334" y1="74.5" x2="968.3333333333334" y2="97.0" stroke="#d8d8d8" stroke-width=".7"/><line x1="977.1666666666666" y1="74.5" x2="977.1666666666666" y2="97.0" stroke="#d8d8d8" stroke-width=".7"/><line x1="959.5" y1="80.125" x2="986.0" y2="80.125" stroke="#d8d8d8" stroke-width=".7"/><line x1="959.5" y1="85.75" x2="986.0" y2="85.75" stroke="#d8d8d8" stroke-width=".7"/><line x1="959.5" y1="91.375" x2="986.0" y2="91.375" stroke="#d8d8d8" stroke-width=".7"/><rect x="965" y="80" width="14" height="11" fill="#e3ecf6"/><g transform="translate(969 98) rotate(-45)"><rect x="8" y="-2" width="18" height="4" rx="2" fill="#f4f4f4" stroke="#c8c8c8" stroke-width=".7"/><path d="M0 -3.5 q-2 3.5 0 7 h8.5 v-7 z" fill="#ecd9b5"/><path d="M-7 0 q3 -5 8 -4 v8 q-5 1 -8 -4 z" fill="#a9c9ec"/></g><rect x="1030.5" y="67.5" width="10.5" height="15" fill="#fdfdfd" stroke="#dcdcdc" stroke-width=".8"/><line x1="1035.75" y1="67.5" x2="1035.75" y2="82.5" stroke="#dcdcdc" stroke-width=".7"/><line x1="1030.5" y1="72.5" x2="1041.0" y2="72.5" stroke="#dcdcdc" stroke-width=".7"/><line x1="1030.5" y1="77.5" x2="1041.0" y2="77.5" stroke="#dcdcdc" stroke-width=".7"/><rect x="1028" y="71.5" width="15" height="3.8" fill="#b9dcb5"/><polygon points="1024.8,73.4 1029,70 1029,76.8" fill="#b9dcb5"/><rect x="1027.5" y="91.0" width="11" height="15" fill="#fdfdfd" stroke="#dcdcdc" stroke-width=".8"/><line x1="1033.0" y1="91.0" x2="1033.0" y2="106.0" stroke="#dcdcdc" stroke-width=".7"/><line x1="1027.5" y1="96.0" x2="1038.5" y2="96.0" stroke="#dcdcdc" stroke-width=".7"/><line x1="1027.5" y1="101.0" x2="1038.5" y2="101.0" stroke="#dcdcdc" stroke-width=".7"/><rect x="1024.8" y="94.5" width="11.6" height="3.9" fill="#f2b9bf"/><path d="M1038 94.5 l4 4 M1042 94.5 l-4 4" stroke="#f2b9bf" stroke-width="1.3"/><rect x="1025.8" y="116.5" width="17" height="12.3" fill="#fdfdfd" stroke="#9a9a9a" stroke-width=".8"/><line x1="1031.4666666666667" y1="116.5" x2="1031.4666666666667" y2="128.8" stroke="#9a9a9a" stroke-width=".7"/><line x1="1037.1333333333332" y1="116.5" x2="1037.1333333333332" y2="128.8" stroke="#9a9a9a" stroke-width=".7"/><line x1="1025.8" y1="122.65" x2="1042.8" y2="122.65" stroke="#9a9a9a" stroke-width=".7"/><rect x="1029.2" y="119" width="5.2" height="6.6" fill="#3a7cc8"/><line x1="1026" y1="113.3" x2="1038" y2="113.3" stroke="#3a7cc8" stroke-width="1"/><rect x="1025.5" y="111.5" width="1" height="3.5" fill="#3a7cc8"/><rect x="1037.5" y="111.5" width="1" height="3.5" fill="#3a7cc8"/><polygon points="1082.4,73.3 1086.8000000000002,73.3 1084.6000000000001,76.7" fill="#444"/><polygon points="1086.3,96.2 1090.7,96.2 1088.5,99.60000000000001" fill="#444"/><polygon points="1086.3,119 1090.7,119 1088.5,122.4" fill="#444"/><path d="M1120 67.5 h12.8 v2.6 h-9 l5.2 5.1 l-5.2 5.2 h9.2 v2.4 h-13 v-2 l5.8 -5.6 l-5.8 -5.7 z" fill="#c4c4c4"/><polygon points="1141,73.3 1145.8,73.3 1143.4,76.6" fill="#444"/><rect x="1119.8" y="90.5" width="12.6" height="15" fill="#fff" stroke="#9a9a9a" stroke-width=".8"/><rect x="1120.2" y="90.9" width="11.8" height="2.8" fill="#a8a8a8"/><rect x="1124.6" y="95.5" width="3" height="3.5" fill="#3a7cc8"/><polygon points="1122,98.6 1130.2,98.6 1126.1,102.8" fill="#3a7cc8"/><polygon points="1138.2,96 1143.0,96 1140.6000000000001,99.5" fill="#444"/><g transform="rotate(-38 1126 121)"><rect x="1117.5" y="117.3" width="17" height="7.5" rx="1.5" fill="#ec8ea3" stroke="#c4566f" stroke-width=".8"/><rect x="1117.5" y="121" width="17" height="3.8" rx="1" fill="#f2b4c2"/></g><polygon points="1138.2,118.8 1143.0,118.8 1140.6000000000001,122.3" fill="#444"/><text x="1158.3" y="84.5" font-family="Liberation Sans" font-size="14" fill="#a9c8e8">A</text><text x="1159.5" y="97.6" font-family="Liberation Sans" font-size="14" fill="#c4c4c4">Z</text><ellipse cx="1180.2" cy="79.8" rx="8.8" ry="2.5" fill="#d9d9d9" stroke="#c0c0c0" stroke-width=".8"/><path d="M1171.5 80.2 l6.5 8 v7.6 h4.4 v-7.6 l6.5 -8 q-8.7 3.5 -17.4 0 z" fill="#c4c4c4"/><polygon points="1192.5,84.3 1196.5,84.3 1194.5,87.3" fill="#c4c4c4"/></svg><div class="a t" style="left:17.6px;top:105.50px;font-size:11.3px;line-height:13.56px;font-weight:400;font-style:normal;color:#111;">Paste</div>
<div class="a t" style="left:554px;top:77.20px;font-size:11.2px;line-height:13.44px;font-weight:400;font-style:normal;color:#8a8a8a;">Wrap Text</div>
<div class="a t" style="left:554px;top:106.90px;font-size:11.2px;line-height:13.44px;font-weight:400;font-style:normal;color:#8a8a8a;">Merge &amp; Center</div>
<div class="a t" style="left:830.6px;width:80px;text-align:center;top:106.22px;font-size:11.2px;line-height:13px;color:#7d7d7d">Conditional</div><div class="a t" style="left:830.4px;width:80px;text-align:center;top:118.12px;font-size:11.2px;line-height:13px;color:#7d7d7d">Formatting</div><div class="a t" style="left:887.5px;width:80px;text-align:center;top:106.22px;font-size:11.2px;line-height:13px;color:#7d7d7d">Format</div><div class="a t" style="left:887.7px;width:80px;text-align:center;top:118.12px;font-size:11.2px;line-height:13px;color:#7d7d7d">as Table</div><div class="a t" style="left:939px;width:80px;text-align:center;top:106.22px;font-size:11.2px;line-height:13px;color:#7d7d7d">Cell</div><div class="a t" style="left:939.1px;width:80px;text-align:center;top:118.12px;font-size:11.2px;line-height:13px;color:#7d7d7d">Styles</div><div class="a t" style="left:1136.7px;width:80px;text-align:center;top:105.92px;font-size:11.2px;line-height:13px;color:#7d7d7d">Sort &amp;</div><div class="a t" style="left:1136.6px;width:80px;text-align:center;top:118.12px;font-size:11.2px;line-height:13px;color:#7d7d7d">Filter</div><div class="a t" style="left:1047.5px;top:68.84px;font-size:11px;line-height:13.2px;font-weight:400;font-style:normal;color:#111;">Insert</div>
<div class="a t" style="left:1047.5px;top:92.29px;font-size:11px;line-height:13.2px;font-weight:400;font-style:normal;color:#111;">Delete</div>
<div class="a t" style="left:1047.5px;top:115.09px;font-size:11px;line-height:13.2px;font-weight:400;font-style:normal;color:#111;">Format</div>

<svg class="a" style="left:0;top:0" width="1280" height="164">
<rect x="0" y="134" width="1280" height="26.5" fill="#fff"/>
<line x1="0" y1="160.5" x2="1280" y2="160.5" stroke="#a9a9a9" stroke-width="1"/>
<line x1="0" y1="161.5" x2="1280" y2="161.5" stroke="#f2f2f2" stroke-width="1"/>
<line x1="0" y1="162.5" x2="1280" y2="162.5" stroke="#a6b0bd" stroke-width="1"/><line x1="0" y1="163.5" x2="1280" y2="163.5" stroke="#cbd7e6" stroke-width="1"/>
<line x1="85.5" y1="134" x2="85.5" y2="160" stroke="#d6d6d6" stroke-width="1"/>
<line x1="180.5" y1="140" x2="180.5" y2="155" stroke="#e2e2e2" stroke-width="1"/>
<polygon points="73.4,143.7 80,143.7 76.7,138.7" fill="#666"/>
<polygon points="73.4,149.6 80,149.6 76.7,155" fill="#666"/>
<path d="M100.8 143.2 l10 10 M110.8 143.2 l-10 10" stroke="#c6c6c6" stroke-width="1.9"/>
<path d="M128.6 147.8 l4 4.2 l8.6 -9.2" fill="none" stroke="#c6c6c6" stroke-width="2"/>
<polygon points="1269,145 1276,145 1272.5,150.2" fill="#555"/>
</svg><div class="a t" style="left:10.8px;top:141.89px;font-size:12px;line-height:14.4px;font-weight:400;font-style:normal;color:#111;">D6</div>
<div class="a t" style="left:158px;top:138px;font-family:'Liberation Serif';font-style:italic;font-size:17px;line-height:18px;color:#333;letter-spacing:-0.5px">fx</div>
<svg class="a" style="left:0;top:0" width="1280" height="800">
<rect x="0" y="751" width="1280" height="26" fill="#efefef"/>
<line x1="0" y1="777.5" x2="1280" y2="777.5" stroke="#b2b2b2" stroke-width="1"/>
<rect x="0" y="778" width="1280" height="22" fill="url(#sg)"/>
<defs><linearGradient id="sg" x1="0" y1="0" x2="0" y2="1"><stop offset="0" stop-color="#dddddd"/><stop offset="1" stop-color="#d3d3d3"/></linearGradient></defs>
<polygon points="21.9,759.6 21.9,769.1 15,764.35" fill="#9a9a9a"/>
<polygon points="38.2,759.6 38.2,769.1 45.1,764.35" fill="#555"/>
<line x1="60.5" y1="753" x2="60.5" y2="775" stroke="#d8d8d8" stroke-width="1"/><line x1="147.5" y1="753" x2="147.5" y2="775" stroke="#d8d8d8" stroke-width="1"/><line x1="234.5" y1="753" x2="234.5" y2="775" stroke="#d8d8d8" stroke-width="1"/><line x1="511.5" y1="753" x2="511.5" y2="775" stroke="#d8d8d8" stroke-width="1"/><line x1="598.5" y1="753" x2="598.5" y2="775" stroke="#d8d8d8" stroke-width="1"/><line x1="684.5" y1="753" x2="684.5" y2="775" stroke="#d8d8d8" stroke-width="1"/><line x1="869" y1="753" x2="869" y2="775" stroke="#d8d8d8" stroke-width="1"/><line x1="955" y1="753" x2="955" y2="775" stroke="#d8d8d8" stroke-width="1"/><line x1="1028.5" y1="753" x2="1028.5" y2="775" stroke="#d8d8d8" stroke-width="1"/><line x1="1116" y1="753" x2="1116" y2="775" stroke="#d8d8d8" stroke-width="1"/><line x1="1210" y1="753" x2="1210" y2="775" stroke="#d8d8d8" stroke-width="1"/><line x1="1249" y1="753" x2="1249" y2="775" stroke="#d8d8d8" stroke-width="1"/><rect x="148" y="751" width="86" height="2" fill="#b4c7e0"/><rect x="685" y="751" width="96" height="2" fill="#f2c6c6"/><rect x="869.5" y="751" width="85" height="2" fill="#f2c6c6"/><path d="M321.5 751 v19.5 a3 3 0 0 0 3 3 h97 a3 3 0 0 0 3 -3 v-19.5" fill="#fff" stroke="#c4c4c4" stroke-width="1"/><path d="M82.2 762.5 v-1.8 a2.9 2.9 0 0 1 5.8 0 v1.8" fill="none" stroke="#6d6d6d" stroke-width="1.6"/><rect x="80.5" y="762.3" width="9.2" height="6.3" rx=".8" fill="#6d6d6d"/><path d="M169.29999999999998 762.5 v-1.8 a2.9 2.9 0 0 1 5.8 0 v1.8" fill="none" stroke="#6d6d6d" stroke-width="1.6"/><rect x="167.6" y="762.3" width="9.2" height="6.3" rx=".8" fill="#6d6d6d"/><path d="M257.0 762.5 v-1.8 a2.9 2.9 0 0 1 5.8 0 v1.8" fill="none" stroke="#6d6d6d" stroke-width="1.6"/><rect x="255.3" y="762.3" width="9.2" height="6.3" rx=".8" fill="#6d6d6d"/><path d="M448.8 762.5 v-1.8 a2.9 2.9 0 0 1 5.8 0 v1.8" fill="none" stroke="#6d6d6d" stroke-width="1.6"/><rect x="447.1" y="762.3" width="9.2" height="6.3" rx=".8" fill="#6d6d6d"/><path d="M531.7 762.5 v-1.8 a2.9 2.9 0 0 1 5.8 0 v1.8" fill="none" stroke="#6d6d6d" stroke-width="1.6"/><rect x="530" y="762.3" width="9.2" height="6.3" rx=".8" fill="#6d6d6d"/><path d="M624.0 762.5 v-1.8 a2.9 2.9 0 0 1 5.8 0 v1.8" fill="none" stroke="#6d6d6d" stroke-width="1.6"/><rect x="622.3" y="762.3" width="9.2" height="6.3" rx=".8" fill="#6d6d6d"/><path d="M699.2 762.5 v-1.8 a2.9 2.9 0 0 1 5.8 0 v1.8" fill="none" stroke="#6d6d6d" stroke-width="1.6"/><rect x="697.5" y="762.3" width="9.2" height="6.3" rx=".8" fill="#6d6d6d"/><path d="M811.7 762.5 v-1.8 a2.9 2.9 0 0 1 5.8 0 v1.8" fill="none" stroke="#6d6d6d" stroke-width="1.6"/><rect x="810" y="762.3" width="9.2" height="6.3" rx=".8" fill="#6d6d6d"/><path d="M886.7 762.5 v-1.8 a2.9 2.9 0 0 1 5.8 0 v1.8" fill="none" stroke="#6d6d6d" stroke-width="1.6"/><rect x="885" y="762.3" width="9.2" height="6.3" rx=".8" fill="#6d6d6d"/><path d="M1058.2 762.5 v-1.8 a2.9 2.9 0 0 1 5.8 0 v1.8" fill="none" stroke="#6d6d6d" stroke-width="1.6"/><rect x="1056.5" y="762.3" width="9.2" height="6.3" rx=".8" fill="#6d6d6d"/><path d="M1144.2 762.5 v-1.8 a2.9 2.9 0 0 1 5.8 0 v1.8" fill="none" stroke="#6d6d6d" stroke-width="1.6"/><rect x="1142.5" y="762.3" width="9.2" height="6.3" rx=".8" fill="#6d6d6d"/><path d="M334.59999999999997 762.5 v-1.8 a2.9 2.9 0 0 1 5.8 0 v1.8" fill="none" stroke="#6d6d6d" stroke-width="1.6"/><rect x="332.9" y="762.3" width="9.2" height="6.3" rx=".8" fill="#6d6d6d"/><rect x="1224.5" y="763.5" width="13" height="1.8" fill="#555"/><rect x="1230.1" y="757.9" width="1.8" height="13" fill="#555"/><rect x="995" y="778" width="37" height="22" fill="#a8a8a8"/><g fill="#fff"><rect x="1007.0" y="781.8" width="3.4" height="3.4"/><rect x="1007.0" y="786.1999999999999" width="3.4" height="3.4"/><rect x="1007.0" y="790.5999999999999" width="3.4" height="3.4"/><rect x="1011.5" y="781.8" width="3.4" height="3.4"/><rect x="1011.5" y="786.1999999999999" width="3.4" height="3.4"/><rect x="1011.5" y="790.5999999999999" width="3.4" height="3.4"/><rect x="1016.0" y="781.8" width="3.4" height="3.4"/><rect x="1016.0" y="786.1999999999999" width="3.4" height="3.4"/><rect x="1016.0" y="790.5999999999999" width="3.4" height="3.4"/></g><rect x="1042.5" y="781.5" width="13.5" height="13" fill="none" stroke="#555" stroke-width="1"/><rect x="1045" y="784" width="8.5" height="8" fill="none" stroke="#555" stroke-width=".9"/><line x1="1046.5" y1="786.5" x2="1052" y2="786.5" stroke="#555" stroke-width=".8"/><line x1="1046.5" y1="788.5" x2="1052" y2="788.5" stroke="#555" stroke-width=".8"/><line x1="1046.5" y1="790.5" x2="1052" y2="790.5" stroke="#555" stroke-width=".8"/><rect x="1075" y="788.3" width="8" height="1.8" fill="#555"/><rect x="1090" y="787.3" width="100" height="3.4" rx="1.7" fill="#9e9e9e"/><circle cx="1140" cy="789" r="1" fill="#eee"/><circle cx="1130" cy="789.3" r="5.6" fill="#fff" stroke="#b5b5b5" stroke-width=".7"/><rect x="1196.8" y="788.2" width="8.2" height="1.8" fill="#555"/><rect x="1200" y="785" width="1.8" height="8.2" fill="#555"/></svg><div class="a t" style="left:94.9px;top:757.24px;font-size:12px;line-height:14.4px;font-weight:400;font-style:normal;color:#4a4a4a;">Cover</div>
<div class="a t" style="left:181.8px;top:757.24px;font-size:12px;line-height:14.4px;font-weight:400;font-style:normal;color:#4a4a4a;">Home</div>
<div class="a t" style="left:269.5px;top:757.24px;font-size:12px;line-height:14.4px;font-weight:400;font-style:normal;color:#4a4a4a;">Rules</div>
<div class="a t" style="left:460.8px;top:757.24px;font-size:12px;line-height:14.4px;font-weight:400;font-style:normal;color:#4a4a4a;">Cash</div>
<div class="a t" style="left:544.6px;top:757.24px;font-size:12px;line-height:14.4px;font-weight:400;font-style:normal;color:#4a4a4a;">Ratios</div>
<div class="a t" style="left:636px;top:757.24px;font-size:12px;line-height:14.4px;font-weight:400;font-style:normal;color:#4a4a4a;">COA</div>
<div class="a t" style="left:711.5px;top:757.24px;font-size:12px;line-height:14.4px;font-weight:400;font-style:normal;color:#4a4a4a;">Breakeven</div>
<div class="a t" style="left:824px;top:757.24px;font-size:12px;line-height:14.4px;font-weight:400;font-style:normal;color:#4a4a4a;">B1</div>
<div class="a t" style="left:899px;top:757.24px;font-size:12px;line-height:14.4px;font-weight:400;font-style:normal;color:#4a4a4a;">Control</div>
<div class="a t" style="left:980px;top:757.24px;font-size:12px;line-height:14.4px;font-weight:400;font-style:normal;color:#4a4a4a;">Para</div>
<div class="a t" style="left:1070px;top:757.24px;font-size:12px;line-height:14.4px;font-weight:400;font-style:normal;color:#4a4a4a;">Vol</div>
<div class="a t" style="left:1157.5px;top:757.24px;font-size:12px;line-height:14.4px;font-weight:400;font-style:normal;color:#4a4a4a;">OH</div>
<div class="a t" style="left:347.5px;top:757.24px;font-size:12px;line-height:14.4px;font-weight:700;font-style:normal;color:#217a4c;">Statements</div>
<div class="a t" style="left:24.3px;top:781.67px;font-size:12.5px;line-height:15.0px;font-weight:400;font-style:normal;color:#555;">Ready</div>
<div class="a t" style="left:1225.6px;top:781.77px;font-size:12.5px;line-height:15.0px;font-weight:400;font-style:normal;color:#555;">80%</div>

</body></html>
